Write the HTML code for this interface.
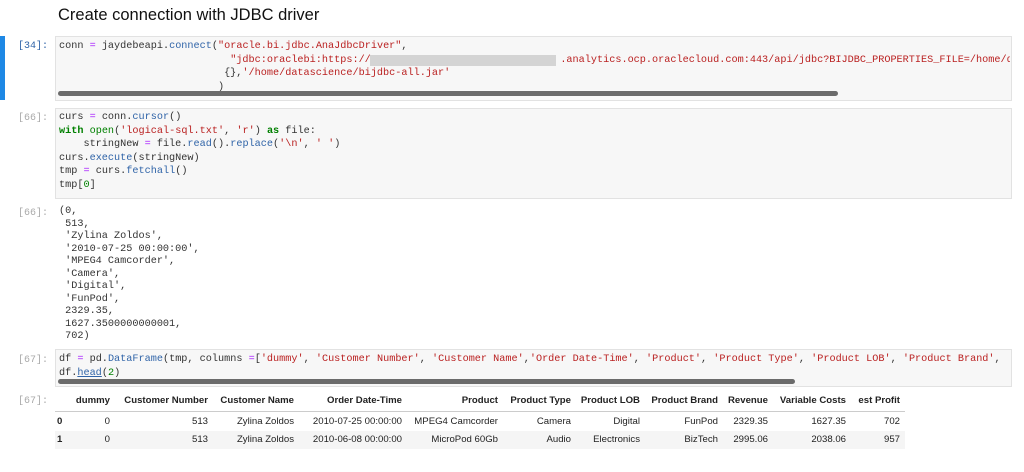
<!DOCTYPE html>
<html><head><meta charset="utf-8"><style>
body{margin:0;width:1024px;height:472px;background:#fff;position:relative;overflow:hidden;font-family:"Liberation Sans",sans-serif;}
.a{position:absolute;}
.cell{position:absolute;left:55px;width:957px;background:#f7f7f7;border:1px solid #e2e2e2;box-sizing:border-box;}
.clip{position:absolute;left:55px;width:955px;overflow:hidden;}
pre{position:absolute;left:4px;margin:0;font-family:"Liberation Mono",monospace;font-size:10.2px;line-height:13.6px;color:#333;white-space:pre;}
.p{position:absolute;left:18px;font-family:"Liberation Mono",monospace;font-size:10px;color:#aaa;}
.s{color:#ba2121}.k{color:#008000;font-weight:bold}.f{color:#3064a8}.o{color:#aa22ff}.n{color:#008000}
.sb{position:absolute;height:5px;background:#6b6b6b;border-radius:3px;}
.t{position:absolute;font-size:9.6px;color:#222;text-align:right;white-space:nowrap;}
.h{font-weight:bold;}
</style></head><body>
<div class="a" style="left:58px;top:6px;font-size:16.5px;color:#111;">Create connection with JDBC driver</div>

<div class="a" style="left:0;top:36px;width:5px;height:64px;background:#1e88e5;"></div>
<div class="p" style="top:41px;color:#3064a8">[34]:</div>
<div class="cell" style="top:36px;height:65px;"></div>
<div class="clip" style="top:36px;height:64px;">
<pre style="top:4px;">conn <span class="o">=</span> jaydebeapi.<span class="f">connect</span>(<span class="s">"oracle.bi.jdbc.AnaJdbcDriver"</span>,
                            <span class="s">"jdbc:oraclebi:https://                               .analytics.ocp.oraclecloud.com:443/api/jdbc?BIJDBC_PROPERTIES_FILE=/home/da</span>
                           {},<span class="s">'/home/datascience/bijdbc-all.jar'</span>
                          )</pre>
</div>
<div class="a" style="left:370px;top:55px;width:186px;height:11px;background:#d4d4d4;"></div>
<div class="sb" style="left:58px;top:91px;width:780px;"></div>

<div class="p" style="top:113px;">[66]:</div>
<div class="cell" style="top:108px;height:91px;"></div>
<div class="clip" style="top:108px;height:90px;">
<pre style="top:3px;">curs <span class="o">=</span> conn.<span class="f">cursor</span>()
<span class="k">with</span> <span class="n">open</span>(<span class="s">'logical-sql.txt'</span>, <span class="s">'r'</span>) <span class="k">as</span> file:
    stringNew <span class="o">=</span> file.<span class="f">read</span>().<span class="f">replace</span>(<span class="s">'\n'</span>, <span class="s">' '</span>)
curs.<span class="f">execute</span>(stringNew)
tmp <span class="o">=</span> curs.<span class="f">fetchall</span>()
tmp[<span class="n">0</span>]</pre>
</div>

<div class="p" style="top:208px;">[66]:</div>
<div class="clip" style="top:205px;height:142px;">
<pre style="top:1px;line-height:12.5px;">(0,
 513,
 'Zylina Zoldos',
 '2010-07-25 00:00:00',
 'MPEG4 Camcorder',
 'Camera',
 'Digital',
 'FunPod',
 2329.35,
 1627.3500000000001,
 702)</pre>
</div>

<div class="p" style="top:355px;">[67]:</div>
<div class="cell" style="top:349px;height:38px;"></div>
<div class="clip" style="top:349px;height:37px;">
<pre style="top:4px;">df <span class="o">=</span> pd.<span class="f">DataFrame</span>(tmp, columns <span class="o">=</span>[<span class="s">'dummy'</span>, <span class="s">'Customer Number'</span>, <span class="s">'Customer Name'</span>,<span class="s">'Order Date-Time'</span>, <span class="s">'Product'</span>, <span class="s">'Product Type'</span>, <span class="s">'Product LOB'</span>, <span class="s">'Product Brand'</span>,
df.<span class="f" style="text-decoration:underline">head</span>(<span class="n">2</span>)</pre>
</div>
<div class="sb" style="left:58px;top:379px;width:737px;"></div>

<div class="p" style="top:396px;">[67]:</div>
<div class="a" style="left:55px;top:411px;width:850px;height:1px;background:#ccc;"></div>
<div class="a" style="left:55px;top:431px;width:850px;height:18px;background:#f5f5f5;"></div>
<div class="t h" style="left:0;width:110px;top:395px;">dummy</div>
<div class="t h" style="left:0;width:208px;top:395px;">Customer Number</div>
<div class="t h" style="left:0;width:294px;top:395px;">Customer Name</div>
<div class="t h" style="left:0;width:402px;top:395px;">Order Date-Time</div>
<div class="t h" style="left:0;width:498px;top:395px;">Product</div>
<div class="t h" style="left:0;width:571px;top:395px;">Product Type</div>
<div class="t h" style="left:0;width:640px;top:395px;">Product LOB</div>
<div class="t h" style="left:0;width:718px;top:395px;">Product Brand</div>
<div class="t h" style="left:0;width:768px;top:395px;">Revenue</div>
<div class="t h" style="left:0;width:846px;top:395px;">Variable Costs</div>
<div class="t h" style="left:0;width:900px;top:395px;">est Profit</div>

<div class="t h" style="left:57px;top:416px;text-align:left;">0</div>
<div class="t" style="left:0;width:110px;top:416px;">0</div>
<div class="t" style="left:0;width:208px;top:416px;">513</div>
<div class="t" style="left:0;width:294px;top:416px;">Zylina Zoldos</div>
<div class="t" style="left:0;width:402px;top:416px;">2010-07-25 00:00:00</div>
<div class="t" style="left:0;width:498px;top:416px;">MPEG4 Camcorder</div>
<div class="t" style="left:0;width:571px;top:416px;">Camera</div>
<div class="t" style="left:0;width:640px;top:416px;">Digital</div>
<div class="t" style="left:0;width:718px;top:416px;">FunPod</div>
<div class="t" style="left:0;width:768px;top:416px;">2329.35</div>
<div class="t" style="left:0;width:846px;top:416px;">1627.35</div>
<div class="t" style="left:0;width:900px;top:416px;">702</div>

<div class="t h" style="left:57px;top:434px;text-align:left;">1</div>
<div class="t" style="left:0;width:110px;top:434px;">0</div>
<div class="t" style="left:0;width:208px;top:434px;">513</div>
<div class="t" style="left:0;width:294px;top:434px;">Zylina Zoldos</div>
<div class="t" style="left:0;width:402px;top:434px;">2010-06-08 00:00:00</div>
<div class="t" style="left:0;width:498px;top:434px;">MicroPod 60Gb</div>
<div class="t" style="left:0;width:571px;top:434px;">Audio</div>
<div class="t" style="left:0;width:640px;top:434px;">Electronics</div>
<div class="t" style="left:0;width:718px;top:434px;">BizTech</div>
<div class="t" style="left:0;width:768px;top:434px;">2995.06</div>
<div class="t" style="left:0;width:846px;top:434px;">2038.06</div>
<div class="t" style="left:0;width:900px;top:434px;">957</div>
</body></html>
